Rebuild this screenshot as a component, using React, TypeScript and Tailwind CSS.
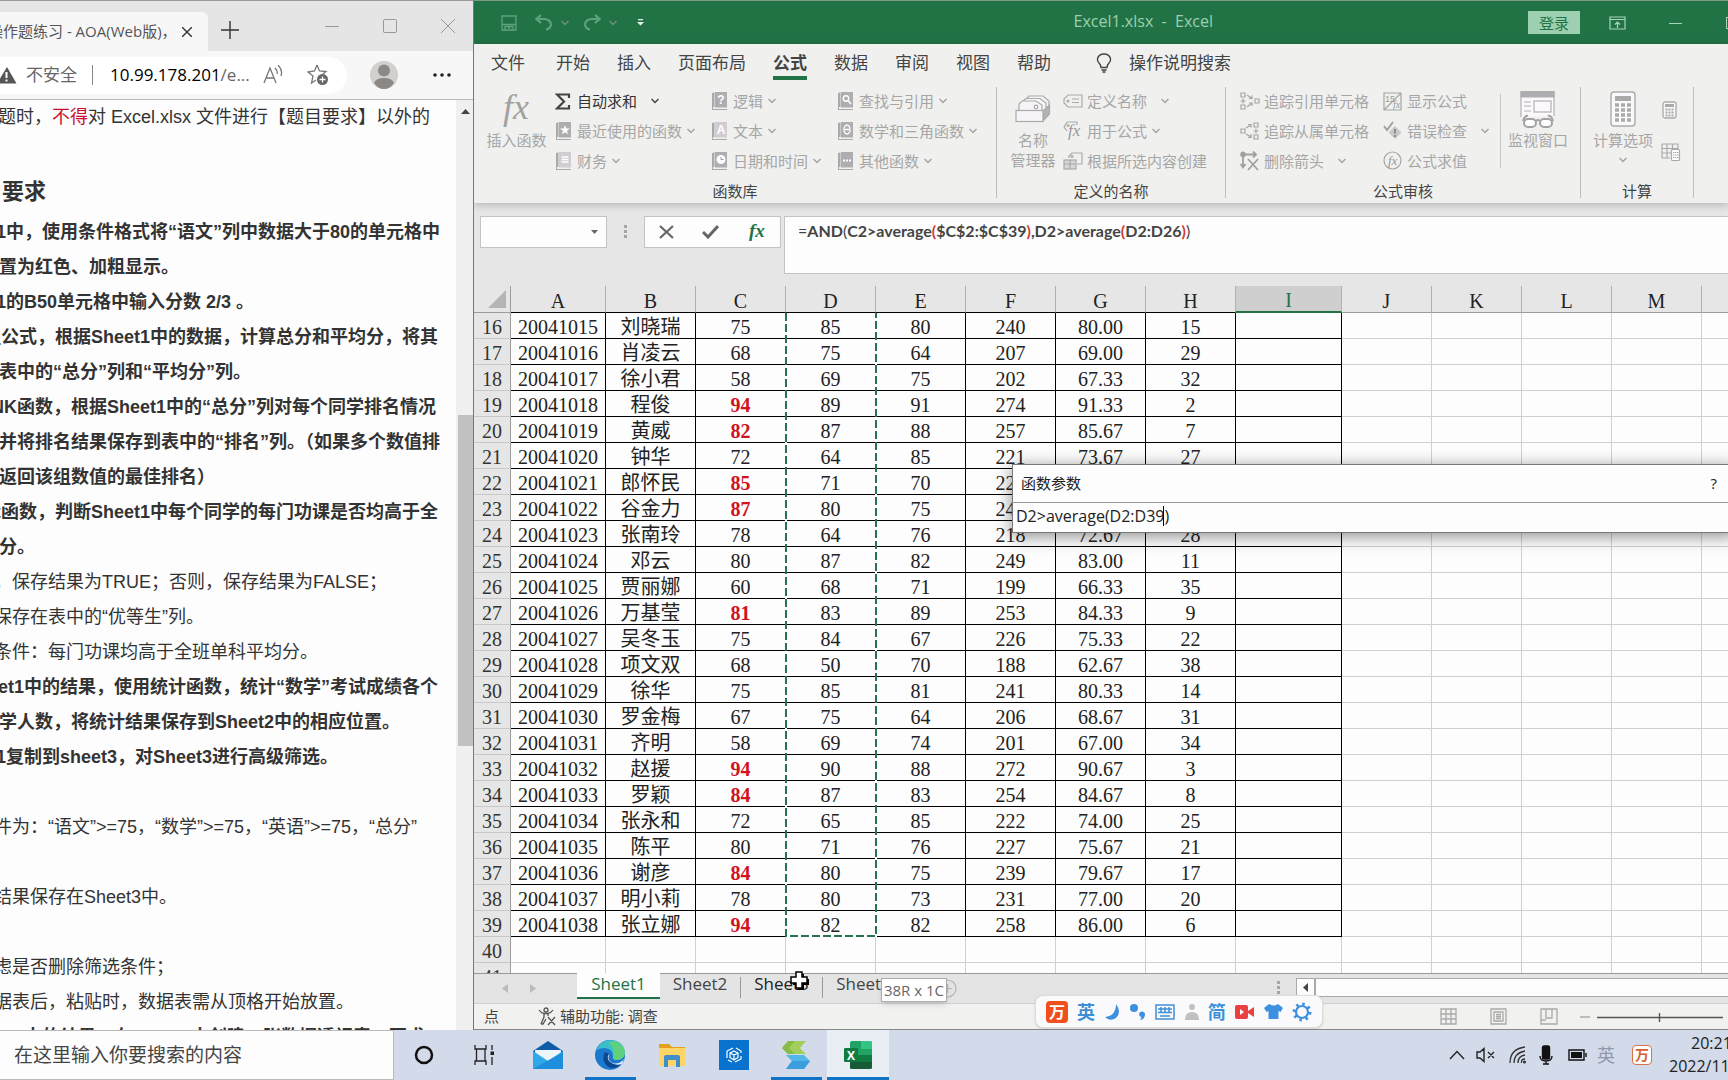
import type { ReactNode } from "react";

const UI = "font-['Open_Sans','Noto_Sans_CJK_SC',sans-serif]";
const DOC = "font-['Liberation_Sans','Noto_Sans_CJK_SC',sans-serif]";
const CELL = "font-['Liberation_Serif','Noto_Sans_CJK_SC',serif]";

/* ---------- browser window ---------- */

type Line = { text: string; kind?: "bold" | "note" };

const lines: Line[] = [
  { text: "1. 在Sheet1中，使用条件格式将“语文”列中数据大于80的单元格中", kind: "bold" },
  { text: "字体颜色设置为红色、加粗显示。", kind: "bold" },
  { text: "2. 在Sheet1的B50单元格中输入分数 2/3 。", kind: "bold" },
  { text: "3. 使用数组公式，根据Sheet1中的数据，计算总分和平均分，将其", kind: "bold" },
  { text: "结果保存到表中的“总分”列和“平均分”列。", kind: "bold" },
  { text: "4. 使用RANK函数，根据Sheet1中的“总分”列对每个同学排名情况", kind: "bold" },
  { text: "进行排序，并将排名结果保存到表中的“排名”列。（如果多个数值排", kind: "bold" },
  { text: "名相同，则返回该组数值的最佳排名）", kind: "bold" },
  { text: "5. 使用逻辑函数，判断Sheet1中每个同学的每门功课是否均高于全", kind: "bold" },
  { text: "班单科平均分。", kind: "bold" },
  { text: "如果是，保存结果为TRUE；否则，保存结果为FALSE；", kind: "note" },
  { text: "将结果保存在表中的“优等生”列。", kind: "note" },
  { text: "优等生条件：每门功课均高于全班单科平均分。", kind: "note" },
  { text: "6. 根据Sheet1中的结果，使用统计函数，统计“数学”考试成绩各个", kind: "bold" },
  { text: "分数段的同学人数，将统计结果保存到Sheet2中的相应位置。", kind: "bold" },
  { text: "7. 将Sheet1复制到sheet3，对Sheet3进行高级筛选。", kind: "bold" },
  { text: "" },
  { text: "筛选条件为：“语文”>=75，“数学”>=75，“英语”>=75，“总分”", kind: "note" },
  { text: "" },
  { text: "将筛选结果保存在Sheet3中。", kind: "note" },
  { text: "" },
  { text: "无需考虑是否删除筛选条件；", kind: "note" },
  { text: "复制数据表后，粘贴时，数据表需从顶格开始放置。", kind: "note" },
  { text: "8. 根据Sheet1中的结果，在Sheet4中创建一张数据透视表，要求：", kind: "bold" },
];

function BrowserWindow() {
  return (
    <section className="flex w-[473px] shrink-0 flex-col overflow-hidden bg-[#fdfdfd]">
      <div className="flex h-[51px] shrink-0 items-end border-t border-[#9a9a9a] bg-[#e5e5e5]">
        <div className={`${UI} flex h-[39px] w-[208px] items-center justify-between rounded-tr-md bg-[#f7f7f7] pr-4 text-[15px] text-[#555]`}>
          <span className="-ml-3 whitespace-nowrap">操作题练习 - AOA(Web版)，</span>
          <button aria-label="关闭标签页">
            <svg width="10" height="10" stroke="#333" strokeWidth="1.4"><path d="M0 0L10 10M10 0L0 10" /></svg>
          </button>
        </div>
        <button aria-label="新建标签页" className="mb-3 ml-[13px]">
          <svg width="18" height="18" stroke="#333" strokeWidth="1.4"><path d="M9 0V18M0 9H18" /></svg>
        </button>
        <div className="mb-[18px] ml-auto flex items-center gap-11 pr-[18px]">
          <button aria-label="最小化"><svg width="14" height="14" stroke="#999"><path d="M0 7.500H14" /></svg></button>
          <button aria-label="最大化"><svg width="14" height="14" stroke="#999" fill="none"><rect x=".5" y=".5" width="13" height="13" rx="1" /></svg></button>
          <button aria-label="关闭"><svg width="14" height="14" stroke="#999"><path d="M0 0L14 14M14 0L0 14" /></svg></button>
        </div>
      </div>

      <div className="flex h-[49px] shrink-0 items-center border-b border-[#bbb] bg-[#f7f7f7]">
        <div className={`${UI} flex h-[37px] w-[347px] items-center rounded-r-full bg-white text-[17px] text-[#666]`}>
          <svg width="17" height="18" className="shrink-0">
            <path d="M7 1L16.500 17.500H-3z" fill="#555" />
            <path d="M6.500 6V12M6.500 13.500V15.500" stroke="#fff" strokeWidth="2" />
          </svg>
          <span className="ml-[9px]">不安全</span>
          <span className="ml-[15px] h-5 w-px bg-[#888]" />
          <span className="ml-[17px] w-[153px]">
            <span className="text-black">10.99.178.201</span>/e...
          </span>
          <button aria-label="朗读">
            <svg width="20" height="20" fill="none" stroke="#777" strokeWidth="1.300">
              <path d="M1 18L7 3L13 18M3 13H11" />
              <path d="M12 3Q15 6 14 9M15 0Q20 5 18 11" />
            </svg>
          </button>
          <button aria-label="收藏" className="ml-6">
            <svg width="22" height="22" fill="none" stroke="#777" strokeWidth="1.300">
              <path d="M10 1L12.500 7L19 7.500L14 12M10 1L7.500 7L1 8L6 12L4.500 19L9 16" />
              <circle cx="15.500" cy="15.500" r="5.500" fill="#666" stroke="none" />
              <path d="M12.500 15.500H18.500M15.500 12.500V18.500" stroke="#fff" />
            </svg>
          </button>
        </div>
        <button aria-label="个人资料" className="ml-[23px]">
          <svg width="28" height="28">
            <circle cx="14" cy="14" r="14" fill="#d2cfcc" />
            <circle cx="14" cy="9.500" r="6" fill="#8b8886" />
            <path d="M4 22Q6 17 14 17T24 22Q20 28 14 28T4 22" fill="#8b8886" />
          </svg>
        </button>
        <button aria-label="设置及其他" className="ml-[35px]">
          <svg width="18" height="4" fill="#222"><circle cx="2" cy="2" r="1.800" /><circle cx="9" cy="2" r="1.800" /><circle cx="16" cy="2" r="1.800" /></svg>
        </button>
      </div>

      <div className="flex min-h-0 flex-1">
        <article className={`${DOC} min-w-0 flex-1 overflow-hidden whitespace-nowrap text-[18px] leading-[35px] text-[#333]`}>
          <p className="-ml-5">做题时，<span className="text-[#c8102e]">不得</span>对 Excel.xlsx 文件进行【题目要求】以外的</p>
          <h2 className="-ml-[42px] pt-[37px] pb-[3px] text-[22px] leading-10 font-bold">题目要求</h2>
          {lines.map((l, i) => (
            <p
              key={i}
              className={l.kind === "bold" ? "-ml-[91px] h-[35px] font-bold" : "-ml-[60px] h-[35px]"}
            >
              {l.text}
            </p>
          ))}
        </article>
        <div className="flex w-[17px] shrink-0 flex-col items-end bg-[#f0f0f0]">
          <svg width="17" height="22" className="shrink-0"><path d="M5 14L9.500 9L14 14z" fill="#444" /></svg>
          <div className="mt-[293px] h-[331px] w-[15px] bg-[#c1c1c1]" />
        </div>
      </div>
    </section>
  );
}

/* ---------- ribbon ---------- */

function Chevron({ dark }: { dark?: boolean }) {
  return (
    <svg width="8" height="6" fill="none" stroke={dark ? "#444" : "#a3a3a3"} strokeWidth="1.500" className="shrink-0">
      <path d="M.5 1L4 4.500L7.500 1" />
    </svg>
  );
}

function Book({ children, light }: { children: ReactNode; light?: boolean }) {
  return (
    <svg width="17" height="18" fill="none">
      <path d="M1.500 1V17.500M1 17.500H16" stroke="#aaa" />
      <path d="M2 0.500H3.500V15H2z" fill="#aaa" />
      <rect x="4" y="0" width="12" height="15.500" fill={light ? "#d2ccd2" : "#b0adb0"} />
      {children}
    </svg>
  );
}

const glyph = "font-['Liberation_Sans'] text-[12px] font-bold";

const icons = {
  sigma: (
    <svg width="16" height="17" fill="none" stroke="#444" strokeWidth="2.200">
      <path d="M14 5V1.500H2L9 8.500L2 15.500H14V12" />
    </svg>
  ),
  recent: <Book><path d="M10 3L11.200 6.500H15L12 8.700L13 12.300L10 10.200L7 12.300L8 8.700L5 6.500H8.800z" fill="#fff" /></Book>,
  finance: <Book light><path d="M6.500 5H13.500M6.500 7.500H13.500M6.500 10H13.500" stroke="#fff" strokeWidth="1.400" /></Book>,
  logic: <Book><text x="10" y="12" textAnchor="middle" fill="#fff" className={glyph}>?</text></Book>,
  text: <Book light><text x="10" y="12" textAnchor="middle" fill="#fff" className={glyph}>A</text></Book>,
  date: <Book><circle cx="10" cy="7.500" r="4.500" fill="#fff" /><path d="M10 5V7.500H12.500" stroke="#999" /></Book>,
  lookup: <Book><circle cx="9" cy="6.500" r="2.700" stroke="#fff" strokeWidth="1.400" /><path d="M11 8.500L14 12" stroke="#fff" strokeWidth="1.600" /></Book>,
  math: <Book><ellipse cx="10" cy="7.500" rx="3" ry="4.500" stroke="#fff" strokeWidth="1.400" /><path d="M8 7.500H12" stroke="#fff" strokeWidth="1.400" /></Book>,
  more: <Book><path d="M6 8.500H8M9 8.500H11M12 8.500H14" stroke="#fff" strokeWidth="2" /></Book>,
  tag: (
    <svg width="20" height="14" fill="none" stroke="#aaa" strokeWidth="1.200">
      <path d="M5 1H19V13H5L1 9V5z" /><circle cx="5" cy="7" r="1" /><path d="M9 5H16M9 8.500H16" />
    </svg>
  ),
  useInFormula: (
    <svg width="20" height="20" fill="none" stroke="#aaa" strokeWidth="1.200">
      <path d="M4 10L1 6L4 1H14V4" /><circle cx="5" cy="4.500" r="1" />
      <text x="5" y="15" fill="#999" stroke="none" className="font-['Liberation_Serif'] text-[17px] italic">fx</text>
    </svg>
  ),
  fromSelection: (
    <svg width="20" height="18" fill="none" stroke="#aaa" strokeWidth="1.200">
      <path d="M6 6V4L9 1H19V12H14" /><circle cx="9" cy="4.500" r="1" />
      <rect x="1" y="8" width="12" height="9" fill="#d8d4d8" /><path d="M1 12H13M7 8V17" />
    </svg>
  ),
  precedents: (
    <svg width="20" height="18" fill="none" stroke="#a5a5a5" strokeWidth="1.200">
      <path d="M1 1H5V5H1zM1 13H5V17H1zM15 7H19V11H15zM3 6.500V11.500M.5 9H5.500M7 3L12 6.500M12 3.500V6.500H9M7 15L12 11M9 11H12V14" />
    </svg>
  ),
  dependents: (
    <svg width="20" height="18" fill="none" stroke="#a5a5a5" strokeWidth="1.200">
      <path d="M1 7H5V11H1zM14 1H18V5H14zM14 13H18V17H14zM16 6.500V11.500M13.500 9H18.500M6 6L11 3M8 2.500H11V5.500M6 12L11 15M11 12V15.500H8" />
    </svg>
  ),
  removeArrows: (
    <svg width="20" height="20" fill="none" stroke="#a0a0a0" strokeWidth="1.800">
      <circle cx="3" cy="3.500" r="2" fill="#a0a0a0" /><path d="M5 3.500H16M13 .5L16 3.500L13 6.500M3 5V16M.5 13L3 16.500L5.500 13M8 8L18 19M18 8L8 19" />
    </svg>
  ),
  showFormulas: (
    <svg width="20" height="19" fill="none" stroke="#a5a5a5" strokeWidth="1.200">
      <path d="M1 1H18V18H1zM1 18L18 1" />
      <text x="2" y="10" fill="#999" stroke="none" className="font-['Liberation_Sans'] text-[9px]">15</text>
      <text x="10" y="16" fill="#999" stroke="none" className="font-['Liberation_Serif'] text-[10px] italic">fx</text>
    </svg>
  ),
  errorCheck: (
    <svg width="20" height="20" fill="none" stroke="#a0a0a0" strokeWidth="2">
      <path d="M1 5L4 9L10 1" /><path d="M12 5L18.500 11.500L12 18L5.500 11.500z" fill="#c9c7c9" stroke="none" /><path d="M12 8V12.500M12 14V16" stroke="#8d8d8d" />
    </svg>
  ),
  evaluate: (
    <svg width="20" height="20" fill="none" stroke="#a5a5a5" strokeWidth="1.200">
      <circle cx="9.500" cy="9.500" r="8.500" />
      <text x="5" y="14" fill="#999" stroke="none" className="font-['Liberation_Serif'] text-[13px] italic">fx</text>
    </svg>
  ),
};

type Cmd = { icon: keyof typeof icons; label: string; menu?: "near" | "far"; dark?: boolean };

function Commands({ items, wide, className }: { items: Cmd[]; wide?: boolean; className: string }) {
  return (
    <div className={`shrink-0 ${className}`}>
      {items.map((c) => (
        <button
          key={c.label}
          className={`flex h-[30px] items-center pb-[2px] whitespace-nowrap text-[15px] leading-none ${c.dark ? "text-[#333]" : "text-[#a6a6a6]"}`}
        >
          <span className={wide ? "mr-1 w-5 shrink-0" : "mr-1 w-[18px] shrink-0"}>{icons[c.icon]}</span>
          {c.label}
          {c.menu && (
            <span className={c.menu === "far" ? "ml-[14px]" : "ml-[5px]"}>
              <Chevron dark={c.dark} />
            </span>
          )}
        </button>
      ))}
    </div>
  );
}

function Group({ label, className, children }: { label: string; className: string; children: ReactNode }) {
  return (
    <div className={`flex h-[111px] shrink-0 flex-col border-r border-[#bdbdbd] ${className}`}>
      <div className="flex h-[90px] shrink-0">{children}</div>
      <div className="text-center text-[15px] leading-[29px] text-[#444]">{label}</div>
    </div>
  );
}

function BigButton({ icon, label, className }: { icon: ReactNode; label: ReactNode; className: string }) {
  return (
    <button className={`flex shrink-0 flex-col items-center whitespace-nowrap text-[15px] leading-5 text-[#a6a6a6] ${className}`}>
      <span className="flex h-[43px] items-center">{icon}</span>
      {label}
    </button>
  );
}

const tabs = ["开始", "插入", "页面布局", "公式", "数据", "审阅", "视图", "帮助"];

function TitleBar() {
  return (
    <header className="flex h-11 shrink-0 items-center border-t border-[#7d9a87] bg-[#217346] text-[#5fa27c]">
      <div className="ml-[27px] flex items-center">
        <button aria-label="保存"><svg width="16" height="16" fill="none" stroke="currentColor" strokeWidth="1.300"><path d="M1 1H15V15H1zM1 9.500H15M4 15V11.500H12V15M8 12V14" /></svg></button>
        <button aria-label="撤消" className="ml-[18px]"><svg width="18" height="17" fill="none" stroke="currentColor" strokeWidth="2.200"><path d="M6 1L1.500 5L6 9M2 5H10Q16 6 16 11Q15 15 11 15.500" /></svg></button>
        <span className="ml-2 opacity-60"><Chevron /></span>
        <button aria-label="恢复" className="ml-[14px]"><svg width="18" height="17" fill="none" stroke="currentColor" strokeWidth="2.200"><path d="M12 1L16.500 5L12 9M16 5H8Q2 6 2 11Q3 15 7 15.500" /></svg></button>
        <span className="ml-2 opacity-60"><Chevron /></span>
        <button aria-label="自定义快速访问工具栏" className="ml-5"><svg width="7" height="7" fill="#e5f2ea"><path d="M1 0H6V1.200H1zM0 3H7L3.500 6.500z" /></svg></button>
      </div>
      <h1 className={`${UI} ml-auto pb-1 text-[16px] whitespace-pre text-[#9dcfb0]`}>Excel1.xlsx  -  Excel</h1>
      <div className="ml-[315px] flex shrink-0 items-center text-[#a5d6b7]">
        <button className={`${UI} h-[23px] w-[52px] bg-[#9dd0b1] text-[15px] leading-[22px] text-[#217346]`}>登录</button>
        <button aria-label="功能区显示选项" className="ml-[29px]"><svg width="17" height="14" fill="none" stroke="currentColor" strokeWidth="1.200"><path d="M1 1H16V13H1zM1 3.500H16M8.500 12V6M6 8.500L8.500 6L11 8.500" /></svg></button>
        <button aria-label="最小化" className="ml-[43px]"><svg width="13" height="14" stroke="currentColor"><path d="M0 7.500H13" /></svg></button>
        <button aria-label="最大化" className="ml-11 h-3 w-[2px] border-y border-l border-[#a5d6b7]" />
      </div>
    </header>
  );
}

function Ribbon() {
  return (
    <div className={`${UI} relative z-10 shrink-0 bg-[#f0f1ef] pb-[5px] shadow-[0_2px_8px_rgba(0,0,0,0.22)]`}>
      <nav className="flex h-[43px] items-start gap-[27px] pl-[17px] text-[17px] leading-[37px] whitespace-nowrap text-[#444]">
        <button className="mr-1">文件</button>
        {tabs.map((t) => (
          <button key={t} className={t === "公式" ? "h-9 border-b-4 border-[#217346] font-bold" : ""}>{t}</button>
        ))}
        <button className="ml-[18px] flex items-center gap-[17px]">
          <svg width="16" height="20" fill="none" stroke="#444" strokeWidth="1.400">
            <path d="M5 14.500Q5 12 3 10Q1 8 1.500 5.500Q3 1 8 1T14.500 5.500Q15 8 13 10Q11 12 11 14.500zM5.500 17H10.500M6.500 19H9.500" />
          </svg>
          操作说明搜索
        </button>
      </nav>
      <div className="flex">
        <Group label="函数库" className="w-[523px]">
          <BigButton
            className="ml-3 w-[61px]"
            label="插入函数"
            icon={
              <svg width="34" height="40">
                <text x="3" y="30" fill="#a3a0a0" className="font-['Liberation_Serif'] text-[36px] italic">fx</text>
              </svg>
            }
          />
          <Commands className="ml-2 w-[156px]" items={[
            { icon: "sigma", label: "自动求和", menu: "far", dark: true },
            { icon: "recent", label: "最近使用的函数", menu: "near" },
            { icon: "finance", label: "财务", menu: "near" },
          ]} />
          <Commands className="w-[126px]" items={[
            { icon: "logic", label: "逻辑", menu: "near" },
            { icon: "text", label: "文本", menu: "near" },
            { icon: "date", label: "日期和时间", menu: "near" },
          ]} />
          <Commands className="" items={[
            { icon: "lookup", label: "查找与引用", menu: "near" },
            { icon: "math", label: "数学和三角函数", menu: "near" },
            { icon: "more", label: "其他函数", menu: "near" },
          ]} />
        </Group>
        <Group label="定义的名称" className="w-[229px]">
          <BigButton
            className="ml-3 w-[48px]"
            label={<>名称<br />管理器</>}
            icon={
              <svg width="36" height="28" fill="#f7f4f7" stroke="#aaa" strokeWidth="1.200">
                <path d="M11 9V4L14 1H28L34 6V14" />
                <path d="M8 10V6L11 3.500H25L31 8V15" />
                <path d="M4 15V9L7 6H21L27 10V15" />
                <circle cx="21" cy="12" r="1.800" />
                <path d="M28 16L34.500 10V19L28 26z" fill="#b5b1b5" />
                <rect x="1" y="15.500" width="27" height="11" />
              </svg>
            }
          />
          <Commands className="ml-[6px]" wide items={[
            { icon: "tag", label: "定义名称", menu: "far" },
            { icon: "useInFormula", label: "用于公式", menu: "near" },
            { icon: "fromSelection", label: "根据所选内容创建" },
          ]} />
        </Group>
        <Group label="公式审核" className="w-[355px]">
          <Commands className="ml-[14px] w-[143px]" wide items={[
            { icon: "precedents", label: "追踪引用单元格" },
            { icon: "dependents", label: "追踪从属单元格" },
            { icon: "removeArrows", label: "删除箭头", menu: "far" },
          ]} />
          <Commands className="w-[117px]" wide items={[
            { icon: "showFormulas", label: "显示公式" },
            { icon: "errorCheck", label: "错误检查", menu: "far" },
            { icon: "evaluate", label: "公式求值" },
          ]} />
          <div className="mt-[7px] h-[74px] w-px bg-[#c6c6c6]" />
          <BigButton
            className="ml-[7px]"
            label="监视窗口"
            icon={
              <svg width="38" height="38" fill="none" stroke="#b3afb3" strokeWidth="1.200">
                <path d="M2 27V2H35V26" fill="#fbf9fb" /><rect x="1.500" y="1" width="34" height="6.500" fill="#b0adb0" stroke="none" />
                <path d="M5 12H12M5 16H12M5 21H12" /><rect x="15" y="11" width="17" height="11" />
                <path d="M4 31Q6 25 9 26M34 31Q32 25 29 26M17 31Q19 29 21 31" stroke="#a5a2a5" strokeWidth="2" />
                <rect x="5" y="29" width="12" height="8" rx="4" fill="#fff" stroke="#a5a2a5" strokeWidth="2" />
                <rect x="21" y="29" width="12" height="8" rx="4" fill="#fff" stroke="#a5a2a5" strokeWidth="2" />
              </svg>
            }
          />
        </Group>
        <Group label="计算" className="w-[113px]">
          <BigButton
            className="ml-3"
            label={<>计算选项<span className="flex h-5 items-center"><Chevron /></span></>}
            icon={
              <svg width="26" height="36" fill="none" stroke="#aaa" strokeWidth="1.400">
                <rect x="1" y="1" width="24" height="34" rx="3" fill="#fbf9fb" /><rect x="5" y="5" width="16" height="5" fill="#aaa" stroke="none" />
                <path d="M5 14H21M5 19H21M5 24H21M5 29H21" strokeWidth="3.500" strokeDasharray="4 2" />
              </svg>
            }
          />
          <div className="ml-2 flex flex-col gap-6 pt-[14px]">
            <button aria-label="开始计算">
              <svg width="20" height="18" fill="none" stroke="#aaa" strokeWidth="1.300">
                <rect x="2" y="1" width="13" height="16" rx="2" fill="#fbf9fb" /><path d="M4 4.500H13" strokeWidth="3" /><path d="M4.500 8.500H13M4.500 11.500H13M4.500 14.500H13" strokeWidth="2" strokeDasharray="2 1" />
              </svg>
            </button>
            <button aria-label="计算工作表">
              <svg width="20" height="19" fill="none" stroke="#aaa" strokeWidth="1.200">
                <path d="M1 1H17V6M1 1V15H9M1 5.500H17M1 10H10M6 1V15M11.500 1V6" /><rect x="10.500" y="6.500" width="8" height="11" rx="1" fill="#fff" /><path d="M12 9.500H17.500M12 12H17.500M12 14.500H17.500" strokeDasharray="1.500 .5" />
              </svg>
            </button>
          </div>
        </Group>
      </div>
    </div>
  );
}

function FormulaBar() {
  return (
    <div className="flex h-[83px] shrink-0 items-start bg-[#e6e6e6] pt-[13px] pl-[6px]">
      <div className="flex h-8 w-[127px] items-center border border-[#c3c3c3] bg-[#fdfdfd]">
        <input aria-label="名称框" className="h-full min-w-0 flex-1 bg-transparent px-2 outline-none" />
        <button aria-label="名称列表" className="mr-2"><svg width="7" height="4"><path d="M0 0H7L3.500 4z" fill="#666" /></svg></button>
      </div>
      <svg width="3" height="14" className="mt-[9px] ml-[17px]" fill="#a5a5a5"><path d="M0 0H3V3H0zM0 5H3V8H0zM0 10H3V13H0z" /></svg>
      <div className="ml-[17px] flex h-8 w-[137px] items-center justify-between border border-[#c3c3c3] bg-[#fdfdfd] px-[14px]">
        <button aria-label="取消"><svg width="15" height="14" stroke="#666" strokeWidth="2.200"><path d="M1 1L14 13M14 1L1 13" /></svg></button>
        <button aria-label="输入"><svg width="17" height="14" fill="none" stroke="#666" strokeWidth="3"><path d="M1 7L6 12L16 1" /></svg></button>
        <button aria-label="插入函数"><svg width="19" height="20"><text x="2" y="15" fill="#217346" className="font-['Liberation_Serif'] text-[19px] font-bold italic">fx</text></svg></button>
      </div>
      <div
        role="textbox"
        aria-label="编辑栏"
        className="ml-[3px] h-[58px] flex-1 border border-r-0 border-[#c3c3c3] bg-[#fdfdfd] pt-[2px] pl-[13px] font-['Lato',sans-serif] text-[16px] leading-6 font-bold whitespace-nowrap text-[#444]"
      >
        <span className="font-normal">=</span>AND<span className="font-normal">(</span>C2&gt;average<span className="text-[#d33a3a]">(</span>$C$2:$C$39<span className="text-[#d33a3a]">)</span>,D2&gt;average<span className="text-[#d33a3a]">(</span>D2:D26<span className="text-[#d33a3a]">)</span><span className="font-normal">)</span>
      </div>
    </div>
  );
}

/* ---------- sheet ---------- */

// number, name, 语文, 数学, 英语, total, average, rank
const data: [string, string, number, number, number, number, string, number][] = [
  ["20041015", "刘晓瑞", 75, 85, 80, 240, "80.00", 15],
  ["20041016", "肖凌云", 68, 75, 64, 207, "69.00", 29],
  ["20041017", "徐小君", 58, 69, 75, 202, "67.33", 32],
  ["20041018", "程俊", 94, 89, 91, 274, "91.33", 2],
  ["20041019", "黄威", 82, 87, 88, 257, "85.67", 7],
  ["20041020", "钟华", 72, 64, 85, 221, "73.67", 27],
  ["20041021", "郎怀民", 85, 71, 70, 226, "75.33", 22],
  ["20041022", "谷金力", 87, 80, 75, 242, "80.67", 13],
  ["20041023", "张南玲", 78, 64, 76, 218, "72.67", 28],
  ["20041024", "邓云", 80, 87, 82, 249, "83.00", 11],
  ["20041025", "贾丽娜", 60, 68, 71, 199, "66.33", 35],
  ["20041026", "万基莹", 81, 83, 89, 253, "84.33", 9],
  ["20041027", "吴冬玉", 75, 84, 67, 226, "75.33", 22],
  ["20041028", "项文双", 68, 50, 70, 188, "62.67", 38],
  ["20041029", "徐华", 75, 85, 81, 241, "80.33", 14],
  ["20041030", "罗金梅", 67, 75, 64, 206, "68.67", 31],
  ["20041031", "齐明", 58, 69, 74, 201, "67.00", 34],
  ["20041032", "赵援", 94, 90, 88, 272, "90.67", 3],
  ["20041033", "罗颖", 84, 87, 83, 254, "84.67", 8],
  ["20041034", "张永和", 72, 65, 85, 222, "74.00", 25],
  ["20041035", "陈平", 80, 71, 76, 227, "75.67", 21],
  ["20041036", "谢彦", 84, 80, 75, 239, "79.67", 17],
  ["20041037", "明小莉", 78, 80, 73, 231, "77.00", 20],
  ["20041038", "张立娜", 94, 82, 82, 258, "86.00", 6],
];

const cols = "ABCDEFGHIJKLMN".split("");
const rowHead = "border-r border-b border-r-[#9c9c9c] border-b-[#c8c8c8] bg-[#e6e6e6] p-0 pt-[3px] font-normal text-[#333]";

function Sheet() {
  return (
    <div className="relative min-h-0 flex-1 overflow-hidden bg-[#fdfdfd]">
      <table className={`${CELL} w-[1318px] table-fixed border-separate border-spacing-0 text-center text-[20px] leading-[22px] text-[#222]`}>
        <colgroup>
          <col className="w-[37px]" />
          {cols.map((c) => (
            <col key={c} className={c === "A" ? "w-[95px]" : c === "I" ? "w-[106px]" : "w-[90px]"} />
          ))}
        </colgroup>
        <thead>
          <tr className="h-[27px] bg-[#e6e6e6]">
            <th className="border-r border-b border-[#9c9c9c] p-0">
              <svg width="18" height="18" className="ml-auto mr-1"><path d="M18 0V18H0z" fill="#b5b5b5" /></svg>
            </th>
            {cols.map((c, i) => (
              <th
                key={c}
                scope="col"
                className={
                  c === "I"
                    ? "border-r border-b-2 border-r-[#b0b0b0] border-b-[#217346] bg-[#cfcfcf] p-0 pt-[3px] font-normal text-[#217346]"
                    : i < 8
                      ? "border-r border-b border-r-[#b0b0b0] border-b-black p-0 pt-[3px] font-normal"
                      : "border-r border-b border-r-[#b0b0b0] border-b-[#9c9c9c] p-0 pt-[3px] font-normal"
                }
              >
                {c}
              </th>
            ))}
          </tr>
        </thead>
        <tbody>
          {data.map((r, i) => (
            <tr key={r[0]} className="h-[26px]">
              <th scope="row" className={rowHead}>{i + 16}</th>
              {r.map((v, j) => (
                <td
                  key={j}
                  className={`border-r border-b border-black p-0 pt-[3px] whitespace-nowrap ${j === 2 && Number(v) > 80 ? "font-bold text-[#d0141e]" : ""}`}
                >
                  {v}
                </td>
              ))}
              <td className="border-r border-b border-black p-0" />
              {[0, 1, 2, 3, 4].map((k) => (
                <td key={k} className="border-r border-b border-[#d0d0d0] p-0" />
              ))}
            </tr>
          ))}
          {[40, 41].map((n) => (
            <tr key={n} className="h-[26px]">
              <th scope="row" className={rowHead}>{n}</th>
              {cols.map((c) => (
                <td key={c} className="border-r border-b border-[#d0d0d0] p-0" />
              ))}
            </tr>
          ))}
        </tbody>
      </table>

      {/* marching ants round the picked range */}
      <svg className="absolute top-[27px] left-[311px]" width="92" height="625" fill="none">
        <path d="M1 0V623H91V0" stroke="#fff" strokeWidth="2" />
        <path d="M1 0V623H91V0" stroke="#26734f" strokeWidth="2" strokeDasharray="8 3" />
      </svg>
    </div>
  );
}

function ArgsDialog() {
  return (
    <div role="dialog" aria-label="函数参数" className={`${UI} absolute top-[464px] -right-2 left-[538px] z-20 border border-[#777] bg-[#fdfdfd] text-[15px] text-[#222] shadow-[0_3px_16px_rgba(0,0,0,0.45)]`}>
      <div className="flex h-[37px] items-center justify-between pr-[18px] pl-2">
        <span>函数参数</span>
        <button aria-label="帮助">?</button>
      </div>
      <label className="relative flex h-[30px] items-center border-t border-[#999]">
        <input aria-label="参数" defaultValue="D2>average(D2:D39)" className="h-full w-full bg-transparent pb-1 pl-[3px] text-[16px] outline-none" />
        <span className="absolute top-[3px] left-[150px] h-5 w-px bg-black" />
      </label>
    </div>
  );
}

function SheetTabs() {
  return (
    <div className={`${UI} flex h-[30px] shrink-0 items-start border-t border-[#999] bg-[#e4e4e4] text-[17px] leading-[19px] text-[#444]`}>
      <button aria-label="上一张" className="mt-[10px] ml-7"><svg width="6" height="9"><path d="M6 0V9L0 4.500z" fill="#bbb" /></svg></button>
      <button aria-label="下一张" className="mt-[10px] ml-[22px]"><svg width="6" height="9"><path d="M0 0V9L6 4.500z" fill="#bbb" /></svg></button>
      <button className="-mt-px ml-[41px] h-[26px] w-[83px] border-b-2 border-[#217346] bg-[#fdfdfd] pb-1 text-[#217346]">Sheet1</button>
      <button className="w-20">Sheet2</button>
      <span className="mt-[3px] h-[21px] w-px bg-[#999]" />
      <button className="w-[81px] text-[#222]">Sheet3</button>
      <span className="mt-[3px] h-[21px] w-px bg-[#999]" />
      <button className="w-[81px]">Sheet4</button>
      <button aria-label="新工作表" className="mt-[5px] ml-[34px]">
        <svg width="19" height="19" fill="none" stroke="#b5b5b5" strokeWidth="1.200"><circle cx="9.500" cy="9.500" r="8.500" /><path d="M9.500 5V14M5 9.500H14" /></svg>
      </button>
      <svg width="3" height="14" className="mt-[7px] ml-auto" fill="#a5a5a5"><path d="M0 0H3V3H0zM0 5H3V8H0zM0 10H3V13H0z" /></svg>
      <div className="mt-1 ml-4 flex h-[19px] w-[432px] shrink-0">
        <button aria-label="向左滚动" className="flex w-[19px] items-center justify-center border border-[#aaa] bg-[#fdfdfd]"><svg width="5" height="9"><path d="M5 0V9L0 4.500z" fill="#444" /></svg></button>
        <div className="flex-1 border border-r-0 border-[#aaa] bg-[#fdfdfd]" />
      </div>
    </div>
  );
}

function StatusBar() {
  return (
    <footer className={`${UI} flex h-[27px] shrink-0 items-center border-t border-b border-t-[#d0d0d0] border-b-[#888] bg-[#f1f1ef] text-[15px] leading-none text-[#444]`}>
      <span className="ml-[10px]">点</span>
      <svg width="18" height="19" fill="none" stroke="#555" strokeWidth="1.300" className="ml-[39px]">
        <circle cx="8" cy="3" r="2" /><path d="M1 3Q3 6 6 6.500H10Q13 6 15 3M6 6.500V10L3 17M10 6.500V9M3 17H5L8 12M10 10L17 18M17 10L10 18" />
      </svg>
      <span className="ml-1 whitespace-nowrap">辅助功能: 调查</span>
      <div className="ml-auto flex items-center pr-[5px]">
        <button aria-label="普通"><svg width="17" height="17" fill="none" stroke="#aaa" strokeWidth="1.300"><path d="M1 1H16V16H1zM1 6H16M1 11H16M6 1V16M11 1V16" /></svg></button>
        <button aria-label="页面布局" className="ml-[33px]"><svg width="17" height="17" fill="none" stroke="#aaa" strokeWidth="1.300"><path d="M1 1H16V16H1zM4 4H13V13H4zM6 6.500H11M6 8.500H11M6 10.500H11" /></svg></button>
        <button aria-label="分页预览" className="ml-[33px]"><svg width="18" height="17" fill="none" stroke="#aaa" strokeWidth="1.300"><path d="M1 1H17V16H1zM6 1V10H12V1M1 12H6" /></svg></button>
        <svg width="10" height="2" className="ml-[22px]"><path d="M0 1H10" stroke="#aaa" strokeWidth="1.500" /></svg>
        <svg width="126" height="10" className="ml-[7px]" stroke="#555"><path d="M0 5.500H126M62.500 1V10" strokeWidth="1.400" /></svg>
      </div>
    </footer>
  );
}

function ImeBar() {
  return (
    <div className={`${UI} absolute bottom-[2px] left-[561px] z-20 flex h-[33px] w-[288px] items-center justify-between rounded-lg border border-[#ddd] bg-[#fafafc] px-[10px] text-[18px] leading-none font-bold text-[#3d8fd6] shadow-sm`}>
      <span className="flex h-[22px] w-[22px] items-center justify-center rounded-sm bg-[#f0501c] text-[16px] text-white">万</span>
      <span>英</span>
      <svg width="16" height="18"><path d="M12 1Q18 9 12 15Q6 19 1 14Q12 13 12 1z" fill="#3d8fe0" /></svg>
      <svg width="17" height="18" fill="#3d8fe0"><circle cx="5" cy="5" r="4" /><path d="M10 11A3 3 0 1 1 16 12Q15 17 11 17Q13 15 12 14Q10 13 10 11" /></svg>
      <svg width="20" height="16" fill="none" stroke="#3d8fd6" strokeWidth="1.500"><path d="M1 1H19V15H1zM3 5H17M3 8.500H17M6 3V9M10 3V9M14 3V9M5 12H15" /></svg>
      <svg width="14" height="18" fill="#c0c0c0"><circle cx="7" cy="4" r="3" /><path d="M0 17Q0 9 7 9T14 17z" /></svg>
      <span>简</span>
      <svg width="20" height="16" fill="#ea4040"><rect x="0" y="1" width="13" height="14" rx="2" /><path d="M13 7L19 3V13L13 9z" /><path d="M5 5L9 8L5 11z" fill="#fff" /></svg>
      <svg width="19" height="17" fill="#3d8fe0"><path d="M5 1Q9.500 4 14 1L19 5L16.500 9L14.500 8V16H4.500V8L2.500 9L0 5z" /></svg>
      <svg width="20" height="20" fill="none" stroke="#3d8fe0"><circle cx="10" cy="10" r="6" strokeWidth="2.200" /><circle cx="10" cy="10" r="8" strokeWidth="3" strokeDasharray="2.500 3.780" /></svg>
    </div>
  );
}

function ExcelWindow() {
  return (
    <section className="relative flex min-w-0 flex-1 flex-col overflow-hidden border-l border-[#777]">
      <TitleBar />
      <Ribbon />
      <FormulaBar />
      <Sheet />
      <SheetTabs />
      <StatusBar />
      <ArgsDialog />
      <div className={`${UI} absolute bottom-7 left-[407px] z-20 h-6 w-[66px] border border-[#aaa] bg-white text-center text-[15px] leading-[22px] whitespace-nowrap text-[#666] shadow-md`}>38R x 1C</div>
      <svg width="20" height="20" className="absolute bottom-[39px] left-[316px] z-30">
        <path d="M8 3H14V8H19V14H14V19H8V14H3V8H8z" fill="#000" />
        <path d="M6 1H12V6H17V12H12V17H6V12H1V6H6z" fill="#fff" stroke="#000" strokeWidth="1.500" />
      </svg>
      <ImeBar />
    </section>
  );
}

/* ---------- taskbar ---------- */

const apps: { name: string; running?: boolean; active?: boolean; icon: ReactNode }[] = [
  {
    name: "邮件",
    icon: (
      <svg width="30" height="30">
        <path d="M0 11L15 1L30 11V13H0z" fill="#0f5ca8" /><path d="M2 10H28V24H2z" fill="#eef6fc" /><path d="M0 11L15 21L30 11V29H0z" fill="#2ea8e8" /><path d="M0 29L30 12V29z" fill="#1d8fdc" />
      </svg>
    ),
  },
  {
    name: "Edge",
    running: true,
    icon: (
      <svg width="30" height="30">
        <circle cx="15" cy="15" r="15" fill="#1b78cf" />
        <path d="M1 11Q5 0 16 0Q29 1 30 13Q29 20 22 20Q17 20 18 16Q18 9 10 8Q4 8 1 11z" fill="#3cbfc9" />
        <path d="M18 1Q29 3 30 13Q29 20 22 20Q17 20 18 16Q20 8 14 3z" fill="#5fd07c" />
        <path d="M10 12Q6 20 12 26Q19 31 26 24Q19 26 15 21Q12 17 14 14z" fill="#0c4590" />
        <path d="M14 14Q12 22 19 23.500Q25 24 29 19L27 24Q20 26 15 22Q11 18 14 14z" fill="#e5edf6" />
      </svg>
    ),
  },
  {
    name: "文件资源管理器",
    icon: (
      <svg width="28" height="26">
        <path d="M1 2H11L14 5H27V24H1z" fill="#e3a21a" /><path d="M1 6H27V24H1z" fill="#fbd667" /><path d="M6 25V15Q6 13 8 13H20Q22 13 22 15V25H18V18H10V25z" fill="#3f8ec9" />
      </svg>
    ),
  },
  {
    name: "虚拟机",
    icon: (
      <svg width="30" height="30" fill="none" stroke="#fff" strokeWidth="1.200">
        <rect width="30" height="30" fill="#0873cf" stroke="none" />
        <path d="M15 11L19 13V17.500L15 20L11 17.500V13zM11 13L15 15L19 13M15 15V20M8 18V11L14 8M17 8L22 11V13M22 16V19L16 22M13 22L9 20" />
      </svg>
    ),
  },
  {
    name: "录屏",
    running: true,
    icon: (
      <svg width="30" height="30">
        <path d="M7 1H25L19 8L25 14H7L1 8z" fill="#a2cf5c" /><path d="M1 8L7 1H14L8 8L14 14H7z" fill="#8abb48" /><path d="M5 15H23L29 21L23 29H5L11 21z" fill="#53b8e8" /><path d="M11 21H29L23 29H5z" fill="#3a9fdc" />
      </svg>
    ),
  },
  {
    name: "Excel",
    running: true,
    active: true,
    icon: (
      <svg width="30" height="30">
        <rect x="7" y="1" width="22" height="28" rx="2" fill="#21a366" /><path d="M18 1H27Q29 1 29 3V9H18z" fill="#33c481" /><path d="M7 15H29V27Q29 29 27 29H9Q7 29 7 27z" fill="#107c41" /><path d="M7 22H29V27Q29 29 27 29H9Q7 29 7 27z" fill="#185c37" />
        <rect x="1" y="8" width="14" height="14" rx="1" fill="#107c41" />
        <text x="8" y="19.500" textAnchor="middle" fill="#fff" className="font-['Open_Sans'] text-[12px] font-bold">X</text>
      </svg>
    ),
  },
];

function Taskbar() {
  return (
    <div className={`${UI} flex h-[50px] shrink-0 overflow-hidden bg-[#d3dae9]`}>
      <input
        aria-label="搜索"
        placeholder="在这里输入你要搜索的内容"
        className="w-[394px] shrink-0 border border-l-0 border-[#bbb] bg-[#fdfdfd] pl-[14px] text-[19px] outline-none placeholder:text-[#444]"
      />
      <button aria-label="Cortana" className="flex w-[60px] items-center justify-center">
        <svg width="20" height="20" fill="none" stroke="#111" strokeWidth="2.500"><circle cx="10" cy="10" r="8" /></svg>
      </button>
      <button aria-label="任务视图" className="mr-[3px] flex w-[60px] items-center justify-center">
        <svg width="21" height="20" fill="none" stroke="#222" strokeWidth="1.300"><path d="M1 0V4H12V0M1 20V16H12V20M2.500 4V16M11 4V16M18 0V5M18 12V20" /><path d="M16.500 6.500H20V10H16.500z" fill="#222" stroke="none" /></svg>
      </button>
      {apps.map((a) => (
        <button key={a.name} aria-label={a.name} className={`flex w-[62px] shrink-0 flex-col items-center ${a.active ? "bg-[#e9edf4]" : ""}`}>
          <span className="flex h-[47px] items-center pt-[3px]">{a.icon}</span>
          {a.running && <span className={`h-[3px] bg-[#1173c5] ${a.active ? "w-full" : "w-[51px]"}`} />}
        </button>
      ))}
      <div className="ml-auto flex w-[279px] shrink-0 items-center [&>*]:shrink-0">
        <svg width="16" height="10" fill="none" stroke="#222" strokeWidth="1.400"><path d="M1 9L8 1.500L15 9" /></svg>
        <svg width="20" height="16" fill="none" stroke="#222" strokeWidth="1.400" className="ml-[11px]"><path d="M1 5H4L8 1.500V14.500L4 11H1zM12 5L18 11M18 5L12 11" /></svg>
        <svg width="18" height="18" fill="none" stroke="#333" strokeWidth="1.300" className="ml-[13px]"><path d="M1 17Q1 3 16 1M5 17Q5 7 16 5M9 17Q9 10 16 9M12.500 17Q12 13 16 13" /><circle cx="15.500" cy="16" r="1.500" fill="#333" stroke="none" /></svg>
        <svg width="14" height="20" fill="none" stroke="#111" strokeWidth="1.400" className="ml-3"><rect x="3.500" y="1" width="7" height="13" rx="1.500" fill="#111" /><path d="M1 11Q1 16 7 16T13 11M7 16V19M4 19H10" /></svg>
        <svg width="19" height="12" fill="none" stroke="#111" strokeWidth="1.400" className="ml-[15px]"><path d="M1 1H16V11H1zM18 4V8" /><path d="M3 3H14V9H3z" fill="#111" stroke="none" /></svg>
        <span className="ml-[10px] text-[18px] leading-none text-[#8e97ad]">英</span>
        <span className="ml-[17px] flex h-5 w-5 items-center justify-center rounded-sm border border-[#d9724a] bg-white text-[14px] leading-none font-bold text-[#d9602c]">万</span>
        <div className="ml-[17px] text-center text-[16px] leading-[23px] whitespace-nowrap text-[#222]">
          <div>20:21</div>
          <div>2022/11/16</div>
        </div>
      </div>
    </div>
  );
}

export default function App() {
  return (
    <div className="flex h-screen flex-col overflow-hidden bg-[#e6e6e6]">
      <main className="flex min-h-0 flex-1">
        <BrowserWindow />
        <ExcelWindow />
      </main>
      <Taskbar />
    </div>
  );
}
